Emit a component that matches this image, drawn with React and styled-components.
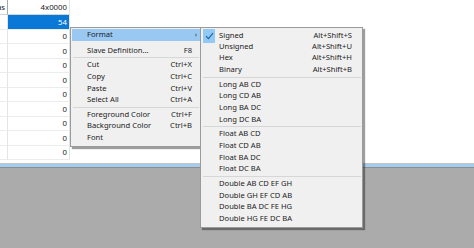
import styled, { createGlobalStyle } from 'styled-components';

const GlobalStyle = createGlobalStyle`
  html, body {
    margin: 0;
    padding: 0;
    width: 474px;
    height: 248px;
    overflow: hidden;
    background: #fff;
  }
  body {
    font-family: "Noto Sans", "Liberation Sans", sans-serif;
    color: #1b1b1b;
  }
`;

const rows = ['54', '0', '0', '0', '0', '0', '0', '0', '0', '0'];

const mainItems = [
  { label: 'Format', sub: true, active: true },
  { label: 'Slave Definition...', key: 'F8' },
  'sep',
  { label: 'Cut', key: 'Ctrl+X' },
  { label: 'Copy', key: 'Ctrl+C' },
  { label: 'Paste', key: 'Ctrl+V' },
  { label: 'Select All', key: 'Ctrl+A' },
  'sep',
  { label: 'Foreground Color', key: 'Ctrl+F' },
  { label: 'Background Color', key: 'Ctrl+B' },
  { label: 'Font' },
];

const formatItems = [
  { label: 'Signed', key: 'Alt+Shift+S', checked: true },
  { label: 'Unsigned', key: 'Alt+Shift+U' },
  { label: 'Hex', key: 'Alt+Shift+H' },
  { label: 'Binary', key: 'Alt+Shift+B' },
  'sep',
  { label: 'Long AB CD' },
  { label: 'Long CD AB' },
  { label: 'Long BA DC' },
  { label: 'Long DC BA' },
  'sep',
  { label: 'Float AB CD' },
  { label: 'Float CD AB' },
  { label: 'Float BA DC' },
  { label: 'Float DC BA' },
  'sep',
  { label: 'Double AB CD EF GH' },
  { label: 'Double GH EF CD AB' },
  { label: 'Double BA DC FE HG' },
  { label: 'Double HG FE DC BA' },
];

const Screen = styled.div`
  position: relative;
  width: 474px;
  height: 248px;
  display: flex;
  flex-direction: column;
  overflow: hidden;
`;

const TableArea = styled.div`
  flex: 0 0 163px;
  background: #fff;
`;

const Grid = styled.div`
  display: grid;
  grid-template-columns: 8px 62px;
  grid-template-rows: 15px;
  grid-auto-rows: 14.5px;
  font-size: 7.8px;
`;

const Cell = styled.div`
  box-sizing: border-box;
  display: flex;
  align-items: center;
  justify-content: flex-end;
  padding-right: 2px;
  overflow: hidden;
  white-space: nowrap;
  border-right: 1px solid ${(p) => (p.$header ? '#a8a8a8' : '#e4e4e4')};
  border-bottom: 1px solid ${(p) => (p.$header ? '#d4d4d4' : '#ececec')};
  background: ${(p) => (p.$selected ? '#0a78d6' : '#fff')};
  color: ${(p) => (p.$selected ? '#fff' : '#1b1b1b')};
`;

const Splitter = styled.div`
  flex: 0 0 3px;
  border-top: 1px solid #c4c4c4;
  border-bottom: 1px solid #8d8d8d;
  background: #a3ccef;
`;

const Desk = styled.div`
  flex: 1;
  background: #ababab;
`;

const Menu = styled.div`
  position: absolute;
  left: ${(p) => p.$left}px;
  top: ${(p) => p.$top}px;
  width: ${(p) => p.$width}px;
  box-sizing: border-box;
  padding: 1px 0 2px 1px;
  background: #f0f0f0;
  border: 1px solid #9a9a9a;
  box-shadow: 2px 2px 1px rgba(0, 0, 0, 0.38);
  font-size: 7.6px;
  z-index: ${(p) => p.$z};
`;

const Item = styled.div`
  display: grid;
  grid-template-columns: ${(p) => p.$gutter}px 1fr auto ${(p) => p.$tail}px;
  align-items: center;
  height: ${(p) => (p.$active ? 12 : 11.67)}px;
  margin-bottom: ${(p) => (p.$active ? 3.5 : 0)}px;
  background: ${(p) => (p.$active ? '#99c9f3' : 'transparent')};
  white-space: nowrap;
`;

const Gutter = styled.div`
  display: flex;
  align-items: center;
  height: 100%;
`;

const CheckBox = styled.span`
  display: flex;
  align-items: center;
  justify-content: center;
  width: 12px;
  height: 14px;
  margin-left: 1px;
  background: #93c9f5;
`;

const Label = styled.span`
  line-height: 1;
`;

const Shortcut = styled.span`
  line-height: 1;
  text-align: right;
`;

const Arrow = styled.span`
  display: flex;
  justify-content: flex-end;
  padding-right: 3px;
  color: #2a2a2a;
  line-height: 1;
`;

const Separator = styled.div`
  height: 1px;
  margin: 1px 1px 1px 1px;
  background: #d6d6d6;
`;

const Check = () => (
  <svg width="9" height="8" viewBox="0 0 9 8">
    <polyline points="1,4.2 3.4,6.6 8,1.2" fill="none" stroke="#1d5fa8" strokeWidth="1.1" />
  </svg>
);

const MenuList = ({ items, gutter, tail }) =>
  items.map((it, i) =>
    it === 'sep' ? (
      <Separator key={i} />
    ) : (
      <Item key={i} $gutter={gutter} $tail={tail} $active={it.active}>
        <Gutter>{it.checked && <CheckBox><Check /></CheckBox>}</Gutter>
        <Label>{it.label}</Label>
        <Shortcut>{it.key || ''}</Shortcut>
        <Arrow>{it.sub ? '›' : ''}</Arrow>
      </Item>
    )
  );

const App = () => {
  return (
    <Screen>
      <GlobalStyle />
      <TableArea>
        <Grid>
          <Cell $header>as</Cell>
          <Cell $header style={{ borderRight: '1px solid #e4e4e4' }}>4x0000</Cell>
          {rows.map((v, i) => [
            <Cell key={`a${i}`} />,
            <Cell key={`b${i}`} $selected={i === 0}>{v}</Cell>,
          ])}
        </Grid>
      </TableArea>
      <Splitter />
      <Desk />
      <Menu $left={70} $top={27} $width={131} $z={1}>
        <MenuList items={mainItems} gutter={15} tail={8} />
      </Menu>
      <Menu $left={200} $top={27} $width={163} $z={2}>
        <MenuList items={formatItems} gutter={17} tail={10} />
      </Menu>
    </Screen>
  );
};

export default App;
